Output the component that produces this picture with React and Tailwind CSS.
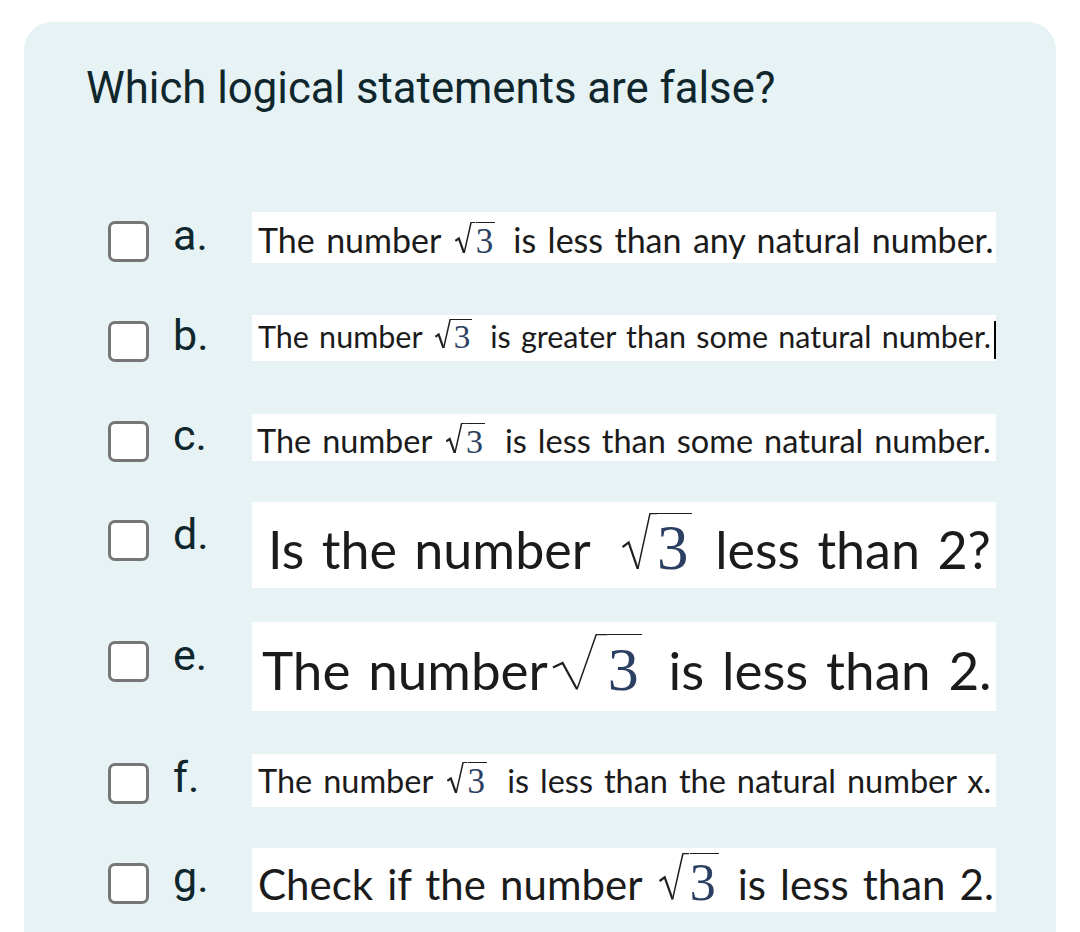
import React from "react";

// radical drawn in svg, digit kept as real text under an overline
function Sqrt({ className, rad = "w-[0.58em]" }) {
  return (
    <span className={`inline-flex shrink-0 items-baseline ${className}`}>
      <svg
        viewBox="0 0 58 100"
        preserveAspectRatio="none"
        className={`h-[0.9em] shrink-0 ${rad}`}
      >
        <path
          d="M1 60 L11 52 L26 99"
          fill="none"
          stroke="#1f1f1f"
          strokeWidth="2.2"
          vectorEffect="non-scaling-stroke"
        />
        <path
          d="M26 99 L46 1 L58 1"
          fill="none"
          stroke="#1f1f1f"
          strokeWidth="1.5"
          vectorEffect="non-scaling-stroke"
        />
      </svg>
      <span className="border-t-[1.5px] border-[#1f1f1f] pt-[0.05em] pr-[0.06em] font-['Liberation_Serif',serif] leading-none text-[#2a3f62]">
        3
      </span>
    </span>
  );
}

const rows = [
  {
    letter: "a.",
    row: "mt-[101px] h-[51px]",
    cb: "mt-[9px]",
    box: "h-[51px] pl-[6px] pt-[10px] text-[34px]",
    sq: "text-[35px] ml-[14px] mr-[18px]",
    before: "The number",
    after: "is less than any natural number.",
  },
  {
    letter: "b.",
    row: "mt-[52px] h-[46px]",
    cb: "mt-[6px]",
    box: "h-[46px] pl-[6px] pt-[4px] text-[30.5px]",
    sq: "text-[33px] ml-[12px] mr-[18px]",
    before: "The number",
    after: "is greater than some natural number.",
    caret: true,
  },
  {
    letter: "c.",
    row: "mt-[53px] h-[47px]",
    cb: "mt-[7px]",
    box: "h-[47px] pl-[5px] pt-[9px] text-[32.5px]",
    sq: "text-[34px] ml-[14px] mr-[20px]",
    before: "The number",
    after: "is less than some natural number.",
  },
  {
    letter: "d.",
    row: "mt-[41px] h-[86px]",
    cb: "mt-[18px]",
    box: "h-[86px] pl-[16px] pt-[11px] text-[52px]",
    sq: "text-[63px] ml-[31px] mr-[23px]",
    rad: "w-[0.56em]",
    before: "Is the number",
    after: "less than 2?",
  },
  {
    letter: "e.",
    row: "mt-[34px] h-[89px]",
    cb: "mt-[19px]",
    box: "h-[89px] pl-[10px] pt-[12px] text-[53px]",
    sq: "text-[62px] ml-[4px] mr-[26px]",
    rad: "w-[0.9em]",
    before: "The number",
    after: "is less than 2.",
  },
  {
    letter: "f.",
    row: "mt-[43px] h-[53px]",
    cb: "mt-[9px]",
    box: "h-[53px] pl-[6px] pt-[8px] text-[32.5px]",
    sq: "text-[35px] ml-[14px] mr-[20px]",
    before: "The number",
    after: "is less than the natural number x.",
  },
  {
    letter: "g.",
    row: "mt-[41px] h-[64px]",
    cb: "mt-[15px]",
    box: "h-[64px] pl-[6px] pt-[5px] text-[42px]",
    sq: "text-[52px] ml-[17px] mr-[19px]",
    before: "Check if the number",
    after: "is less than 2.",
  },
];

export default function App() {
  return (
    <div className="h-[932px] w-[1080px] overflow-hidden bg-white">
      <div className="mx-[24px] mt-[22px] min-h-[910px] rounded-t-[28px] bg-[#e6f2f4] pt-[45px] font-['Roboto',sans-serif] text-[#0e262c]">
        <h1 className="pl-[62px] text-[43.7px] leading-none">
          Which logical statements are false?
        </h1>

        <div className="pl-[84px]">
          {rows.map((r) => (
            <div key={r.letter} className={`flex items-start ${r.row}`}>
              <div className={`flex w-[144px] shrink-0 items-start ${r.cb}`}>
                <div className="h-[41px] w-[41px] shrink-0 rounded-[7px] border-[3px] border-[#767676] bg-white" />
                <span className="-mt-[7px] ml-[24px] text-[43px] leading-none">
                  {r.letter}
                </span>
              </div>
              <div
                className={`flex w-[744px] items-baseline whitespace-nowrap bg-white font-['Lato',sans-serif] leading-none text-[#1b1b1b] [word-spacing:0.08em] ${r.box}`}
              >
                <span>{r.before}</span>
                <Sqrt className={r.sq} rad={r.rad} />
                <span>{r.after}</span>
                {r.caret && (
                  <span className="ml-auto h-[38px] w-[2px] self-center bg-black" />
                )}
              </div>
            </div>
          ))}
        </div>
      </div>
    </div>
  );
}
